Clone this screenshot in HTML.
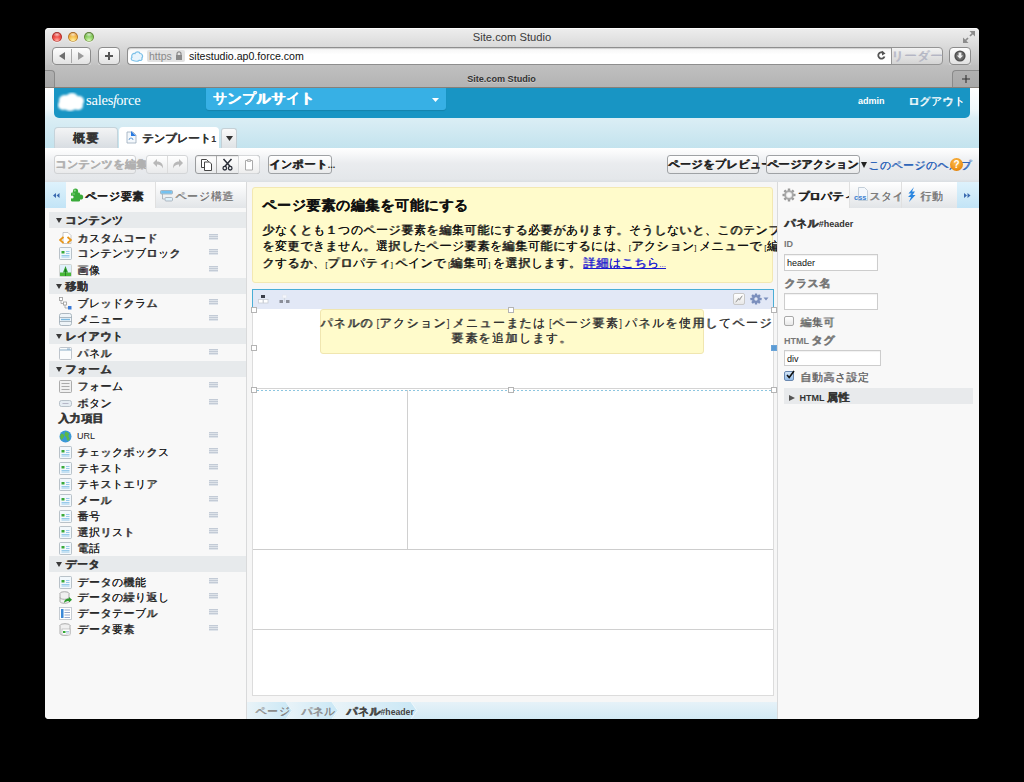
<!DOCTYPE html>
<html><head><meta charset="utf-8">
<style>
*{margin:0;padding:0;box-sizing:border-box}
html,body{width:1024px;height:782px;background:#000;overflow:hidden}
body{position:relative;font-family:"Liberation Sans",sans-serif;color:#222;font-size:10px;line-height:1}
.a{position:absolute;white-space:nowrap}
.win{left:45px;top:28px;width:934px;height:691px;border-radius:5px 5px 4px 4px;overflow:hidden;background:#f4f4f4}
.tl{width:10px;height:10px;border-radius:50%;top:32px;box-shadow:inset 0 0 0 .8px rgba(60,0,0,.35),0 1px 0 rgba(255,255,255,.5)}
.sb{border:1px solid #8c8c8c;border-radius:4px;background:linear-gradient(#fdfdfd,#e2e2e2);box-shadow:0 1px 0 rgba(255,255,255,.6)}
.tb{border:1px solid #b4b6b8;border-radius:3px;background:linear-gradient(#ffffff,#e9eaeb);font-weight:bold;color:#333;text-align:center}
.hd{left:49px;width:197px;height:16px;background:#e7eaec;font-weight:bold;color:#333;font-size:9px;line-height:16px;padding-left:16px;--jl:.69px}
.hd i{position:absolute;left:6.5px;top:5.5px;width:0;height:0;border-left:3.2px solid transparent;border-right:3.2px solid transparent;border-top:5.8px solid #3a3a3a}
.it{left:59px;width:187px;height:16px;line-height:16px;color:#222;font-size:9px;--jl:.55px}
.it i{position:absolute;left:0;top:2px;width:13px;height:13px}
.it>span{position:absolute;left:18px;top:0}
.it b{position:absolute;left:150px;top:4px;width:9px;height:6px;background:repeating-linear-gradient(#c3cbd6 0 1px,#dfe4ea 1px 2px)}

.hdl{width:6px;height:6px;border:1px solid #b4b4b4;background:#fff}
.lbl{left:784px;font-size:9px;font-weight:bold;color:#777}
.inp{left:784px;height:17px;border:1px solid #cdcdcd;background:#fff;font-size:9px;line-height:15px;padding-left:2px;color:#111;box-shadow:inset 0 1px 1px rgba(0,0,0,.06)}
.j{font-size:var(--jf,11px);letter-spacing:var(--jl,.6px);text-shadow:.6px 0 0 currentColor}
</style></head>
<body>
<!-- window -->
<div class="a win"></div>
<!-- title bar -->
<div class="a" style="left:45px;top:28px;width:934px;height:37px;border-radius:4px 4px 0 0;background:linear-gradient(#eeeeee,#dcdcdc 45%,#c2c2c2);box-shadow:inset 0 1px 0 rgba(255,255,255,.8)"></div>
<div class="a tl" style="left:52px;background:radial-gradient(ellipse 40% 25% at 50% 25%,rgba(255,255,255,.7),rgba(255,255,255,0)),radial-gradient(circle at 50% 85%,#ffb0a8 0,#f25850 35%,#d8322c 70%,#9a2420 100%)"></div>
<div class="a tl" style="left:68px;background:radial-gradient(ellipse 40% 25% at 50% 25%,rgba(255,255,255,.7),rgba(255,255,255,0)),radial-gradient(circle at 50% 85%,#fff0a8 0,#f8c858 35%,#e0962a 70%,#9a6412 100%)"></div>
<div class="a tl" style="left:84px;background:radial-gradient(ellipse 40% 25% at 50% 25%,rgba(255,255,255,.7),rgba(255,255,255,0)),radial-gradient(circle at 50% 85%,#d8f8b8 0,#98d870 35%,#68b040 70%,#3a7424 100%)"></div>
<div class="a" style="left:45px;top:32px;width:934px;text-align:center;font-size:11.2px;color:#3a3a3a">Site.com Studio</div>
<!-- resize icon -->
<svg class="a" style="left:963px;top:31px" width="12" height="12" viewBox="0 0 12 12"><path d="M6.5 0H12v5.5z" fill="#8c8c8c"/><path d="M10.5 1.5L7 5" stroke="#8c8c8c" stroke-width="1.7"/><path d="M0 6.5V12h5.5z" fill="#8c8c8c"/><path d="M1.5 10.5L5 7" stroke="#8c8c8c" stroke-width="1.7"/></svg>
<!-- back/forward -->
<div class="a sb" style="left:52px;top:47px;width:39px;height:18px"></div>
<div class="a" style="left:71px;top:49px;width:1px;height:14px;background:#a8a8a8"></div>
<svg class="a" style="left:58px;top:51px" width="30" height="10" viewBox="0 0 30 10"><path d="M7 1v8L1 5z" fill="#6e6e6e"/><path d="M20 1v8l6-4z" fill="#9a9a9a"/></svg>
<div class="a sb" style="left:98px;top:47px;width:22px;height:18px"></div>
<svg class="a" style="left:104px;top:51px" width="10" height="10" viewBox="0 0 10 10"><path d="M5 1v8M1 5h8" stroke="#555" stroke-width="2"/></svg>
<!-- address bar -->
<div class="a" style="left:127px;top:47px;width:765px;height:18px;border:1px solid #8e8e8e;border-right:none;border-radius:4px 0 0 4px;background:linear-gradient(#f4f4f4,#ffffff 40%);box-shadow:inset 0 1px 1px rgba(0,0,0,.15)"></div>
<svg class="a" style="left:130px;top:50px" width="14" height="12" viewBox="0 0 14 12"><path d="M3 10.5C1 10.5 .8 8 2 7.2 1 5 3 3 5 3.6 6 1.2 9.5 1.5 10 3.5c2.5 0 3.3 3 1.8 4.5 1 1.8-1 3-2.5 2.2-1.5 1.3-4 1.2-6.3.3z" fill="#e8f4fc" stroke="#7cc0e8" stroke-width="1.2"/></svg>
<div class="a" style="left:147px;top:50px;width:38px;height:12px;background:#e2e2e2;border-radius:2px"></div>
<div class="a" style="left:149px;top:50px;font-size:10.5px;line-height:12px;color:#8a8a8a">https</div>
<svg class="a" style="left:175px;top:51px" width="8" height="9" viewBox="0 0 8 9"><path d="M2 4V2.8a2 2 0 0 1 4 0V4" fill="none" stroke="#8a8a8a" stroke-width="1.2"/><rect x="1" y="4" width="6" height="5" fill="#8a8a8a"/></svg>
<div class="a" style="left:189px;top:48.8px;font-size:10.6px;line-height:14px;color:#111">sitestudio.ap0.force.com</div>
<svg class="a" style="left:876px;top:50px" width="11" height="11" viewBox="0 0 11 11"><path d="M8.5 6.5A3.2 3.2 0 1 1 7.5 3" fill="none" stroke="#555" stroke-width="1.8"/><path d="M6 .8l3.5 2.6L6 5.6z" fill="#555"/></svg>
<div class="a" style="left:891px;top:47px;width:52px;height:18px;border:1px solid #949494;border-radius:0 4px 4px 0;background:linear-gradient(#f2f2f2,#d4d4d4)"></div>
<div class="a" style="left:891px;top:50px;width:52px;text-align:center;font-size:9.8px;line-height:12px;color:#b4b6c4;--jf:12px;--jl:.92px"><span class="j">リーダー</span></div>
<div class="a sb" style="left:949px;top:47px;width:22px;height:18px"></div>
<svg class="a" style="left:954px;top:50px" width="12" height="12" viewBox="0 0 12 12"><circle cx="6" cy="6" r="5.6" fill="#505050"/><circle cx="6" cy="6" r="4.2" fill="#6a6a6a"/><path d="M4.6 2.6h2.8v2.8h1.8L6 8.8 2.8 5.4h1.8z" fill="#eee"/></svg>
<!-- tab bar -->
<div class="a" style="left:45px;top:65px;width:934px;height:23px;background:linear-gradient(#c0c0c0,#b3b3b3);border-bottom:1px solid #85807a"></div>
<div class="a" style="left:45px;top:70px;width:10px;height:17px;background:linear-gradient(#b0b0b0,#a6a6a6);border:1px solid #8a8a8a;border-left:none;border-bottom:none;border-radius:0 4px 0 0"></div>
<div class="a" style="left:53px;top:74.5px;width:897px;text-align:center;font-size:9.1px;font-weight:bold;color:#333;text-shadow:0 1px 0 rgba(255,255,255,.35)">Site.com Studio</div>
<div class="a" style="left:952px;top:70px;width:27px;height:17px;background:linear-gradient(#b0b0b0,#a8a8a8);border:1px solid #8a8a8a;border-right:none;border-bottom:none;border-radius:4px 0 0 0"></div>
<svg class="a" style="left:961.5px;top:74.5px" width="8" height="8" viewBox="0 0 8 8"><path d="M4 0v8M0 4h8" stroke="#333" stroke-width="1.1"/></svg>

<!-- content bg -->
<div class="a" style="left:45px;top:88px;width:934px;height:60px;background:linear-gradient(#ffffff 0,#f0f8fb 35%,#dbeef5 50%,#c3e3ee 100%)"></div>
<div class="a" style="left:54px;top:88px;width:916px;height:30px;background:#1895c4;border-radius:0 0 5px 5px"></div>
<!-- logo -->
<svg class="a" style="left:57px;top:92px" width="28" height="20" viewBox="0 0 28 20"><g fill="#fff" filter="url(#bl)"><ellipse cx="8" cy="8" rx="6" ry="5"/><ellipse cx="15" cy="6" rx="6" ry="5"/><ellipse cx="22" cy="9" rx="5" ry="5"/><ellipse cx="6" cy="13" rx="5" ry="5"/><ellipse cx="13" cy="14" rx="7" ry="5"/><ellipse cx="21" cy="14" rx="5" ry="4"/></g><defs><filter id="bl"><feGaussianBlur stdDeviation=".8"/></filter></defs></svg>
<div class="a" style="left:86px;top:92px;font-family:'Liberation Serif',serif;font-size:14.5px;line-height:16px;color:#fff;letter-spacing:-.2px">sales<i style="font-style:italic;margin:0 -.5px 0 -.3px">f</i>orce</div>
<div class="a" style="left:206px;top:88px;width:240px;height:22px;background:#37b0e5;border-radius:0 0 3px 3px;box-shadow:0 1px 1px rgba(0,0,0,.12)"></div>
<div class="a" style="left:212.5px;top:91.5px;font-size:11px;line-height:12px;font-weight:bold;color:#fff;--jf:14px;--jl:.64px"><span class="j">サンプルサイト</span></div>
<svg class="a" style="left:432px;top:98px" width="7" height="4" viewBox="0 0 7 4"><path d="M0 0h7L3.5 4z" fill="#fff"/></svg>
<div class="a" style="left:858px;top:96px;font-size:9px;font-weight:bold;color:#fff;line-height:10px">admin</div>
<div class="a" style="left:908px;top:96px;font-size:9px;color:#fff;line-height:10px;--jl:.42px"><span class="j">ログアウト</span></div>
<!-- app tabs -->
<div class="a" style="left:54px;top:127px;width:64px;height:21px;border-radius:4px 4px 0 0;background:linear-gradient(#f3f4f5,#d8dde2);border:1px solid #c5d3da;border-bottom:none"></div>
<div class="a" style="left:54px;top:133px;width:64px;text-align:center;font-size:9.5px;line-height:10px;font-weight:bold;color:#333;--jf:12px;--jl:1.26px"><span class="j">概要</span></div>
<div class="a" style="left:119px;top:127px;width:100px;height:21px;border-radius:4px 4px 0 0;background:#fff"></div>
<svg class="a" style="left:126px;top:131px" width="11" height="13" viewBox="0 0 11 13"><path d="M1 1h6l3 3v8H1z" fill="#f4f8fc" stroke="#9ab" stroke-width=".8"/><path d="M5 0l5 5H5z" fill="#2a7ae0"/><path d="M3 9a2 2 0 0 1 4 0" fill="none" stroke="#48c" stroke-width=".8"/></svg>
<div class="a" style="left:142px;top:133px;font-size:9px;line-height:10px;font-weight:bold;color:#333;--jl:.53px"><span class="j">テンプレート</span>1</div>
<div class="a" style="left:221px;top:128px;width:16px;height:20px;border-radius:3px 3px 0 0;background:linear-gradient(#fafafa,#dfe3e6);border:1px solid #c5d0d6;border-bottom:none"></div>
<svg class="a" style="left:225.5px;top:135.5px" width="7" height="5" viewBox="0 0 7 5"><path d="M0 0h7L3.5 5z" fill="#333"/></svg>
<!-- toolbar -->
<div class="a" style="left:45px;top:148px;width:934px;height:34px;background:linear-gradient(#ffffff 0%,#f7f8f9 18%,#eaecef 45%,#e4e7ea 92%,#dadee2 100%)"></div>
<div class="a tb" style="left:54px;top:155px;width:82px;height:19px;color:#b0b0b0;font-size:9px;line-height:17px;border-color:#d0d2d4;--jl:.61px"><span class="j">コンテンツを編集</span></div>
<div class="a tb" style="left:146px;top:155px;width:42px;height:19px;border-color:#d4d6d8"></div>
<div class="a" style="left:167px;top:156px;width:1px;height:17px;background:#dcdcdc"></div>
<svg class="a" style="left:151px;top:158px" width="34" height="12" viewBox="0 0 34 12"><path d="M2 5l4-4v2.5c4 0 6 2 6 7-1.5-3-3-4-6-4V9z" fill="#b8b8b8"/><path d="M32 5l-4-4v2.5c-4 0-6 2-6 7 1.5-3 3-4 6-4V9z" fill="#b8b8b8"/></svg>
<div class="a tb" style="left:195px;top:155px;width:65px;height:19px;border-color:#9a9c9e;box-shadow:inset 0 1px 1px rgba(0,0,0,.08)"></div>
<div class="a" style="left:216px;top:156px;width:1px;height:17px;background:#aaa"></div>
<div class="a" style="left:238px;top:155px;width:22px;height:19px;background:linear-gradient(#fff,#eee);border:1px solid #d6d8da;border-radius:0 3px 3px 0"></div>
<svg class="a" style="left:200px;top:158px" width="56" height="13" viewBox="0 0 56 13"><path d="M1.5 1.5h5l2 2v6h-7z" fill="#fff" stroke="#444" stroke-width="1"/><path d="M4.5 4h5l2 2v6.5h-7z" fill="#fff" stroke="#444" stroke-width="1"/>
<path d="M23.5 1L30 8.3M31.5 1L25 8.3" stroke="#2a2e38" stroke-width="1.5"/><circle cx="24.8" cy="10.2" r="1.8" fill="none" stroke="#2a2e38" stroke-width="1.3"/><circle cx="30.2" cy="10.2" r="1.8" fill="none" stroke="#2a2e38" stroke-width="1.3"/>
<path d="M45.5 2.5h7v9.5h-7z" fill="#fff" stroke="#aaa" stroke-width="1"/><path d="M47.5 1.5h3v2h-3z" fill="#ddd" stroke="#aaa" stroke-width=".8"/></svg>
<div class="a tb" style="left:268px;top:155px;width:64px;height:19px;border-color:#9fa2a5;font-size:9px;line-height:17px;color:#222;--jl:.73px"><span class="j">インポート</span>...</div>
<div class="a tb" style="left:667px;top:155px;width:92px;height:19px;border-color:#9fa2a5;font-size:9px;line-height:17px;color:#222;--jl:.66px"><span class="j">ページをプレビュー</span></div>
<div class="a tb" style="left:766px;top:155px;width:94px;height:19px;border-color:#9fa2a5;font-size:9px;line-height:17px;color:#222;--jl:.47px"><span class="j">ページアクション</span> <i style="display:inline-block;width:0;height:0;border-left:3.5px solid transparent;border-right:3.5px solid transparent;border-top:6px solid #222;vertical-align:0"></i></div>
<div class="a" style="left:868px;top:160px;font-size:9px;line-height:10px;color:#2a62b8;--jl:.51px"><span class="j">このページのヘルプ</span></div>
<div class="a" style="left:950px;top:158px;width:13px;height:13px;border-radius:50%;background:radial-gradient(circle at 45% 35%,#ffc050,#e88a10 70%,#c86a00);color:#fff;font-size:10px;font-weight:bold;line-height:13px;text-align:center">?</div>

<!-- left panel -->
<div class="a" style="left:45px;top:182px;width:202px;height:537px;background:#f8f8f8;border-right:1px solid #d9dadb;border-bottom-left-radius:4px"></div>
<div class="a" style="left:45px;top:182px;width:21px;height:26px;background:linear-gradient(#def2fc,#c2e4f6)"></div>
<svg class="a" style="left:53px;top:192.5px" width="7" height="5" viewBox="0 0 7 5"><path d="M3 0v5L0 2.5zM6.5 0v5L3.5 2.5z" fill="#3a6ab0"/></svg>
<div class="a" style="left:66px;top:182px;width:89px;height:26px;background:#f9f9f9"></div>
<svg class="a" style="left:70px;top:188px" width="14" height="14" viewBox="0 0 14 14"><g fill="#3aaa3a"><rect x="1" y="4.5" width="9" height="9" rx="1.2"/><circle cx="5.5" cy="3.2" r="2.6"/><circle cx="10.6" cy="9" r="2.6"/><circle cx="2" cy="9" r="1.6" fill="#f9f9f9"/></g><circle cx="4.8" cy="2.6" r="1.1" fill="#8ee08e"/><path d="M2 6h3" stroke="#7cd67c" stroke-width="1"/></svg>
<div class="a" style="left:85px;top:191px;font-size:9px;line-height:10px;font-weight:bold;color:#222;--jl:.85px"><span class="j">ページ要素</span></div>
<div class="a" style="left:155px;top:182px;width:91px;height:26px;background:linear-gradient(#ffffff,#e2e5e8);border-left:1px solid #e0e0e0"></div>
<svg class="a" style="left:160px;top:190px" width="14" height="12" viewBox="0 0 14 12"><rect x=".5" y=".5" width="12" height="3.5" rx="1" fill="#8ecff4" stroke="#a0aab4" stroke-width=".8"/><path d="M1.5 2h10" stroke="#5ab4ec" stroke-width="1"/><path d="M2.5 4v5h2" fill="none" stroke="#a0aab4" stroke-width=".8"/><rect x="5" y="7.5" width="7.5" height="3.5" rx="1" fill="#dff1fb" stroke="#a0aab4" stroke-width=".8"/></svg>
<div class="a" style="left:175px;top:191px;font-size:9px;line-height:10px;color:#7a7a7a;--jl:.85px"><span class="j">ページ構造</span></div>

<div class="a hd" style="top:212px"><i></i><span class="j">コンテンツ</span></div>
<div class="a it" style="top:230px"><i><svg width="13" height="13" viewBox="0 0 13 13"><path d="M4 .5h5l3 3v8H4z" fill="#fff" stroke="#bbb" stroke-width=".8"/><path d="M4.5 5L1 8l3.5 3M8.5 5L12 8l-3.5 3" fill="none" stroke="#e8961a" stroke-width="1.8"/></svg></i><span><span class="j">カスタムコード</span></span><b></b></div>
<div class="a it" style="top:245px"><i><svg width="13" height="13" viewBox="0 0 13 13"><rect x=".5" y=".5" width="12" height="12" rx="1" fill="#f2f8fc" stroke="#aab4bc" stroke-width=".8"/><rect x="2.5" y="4" width="3" height="2.5" fill="#3aaa3a"/><path d="M7 4.5h3.5M7 6.5h3.5M2.5 8.5h8M2.5 10h8" stroke="#8cc4e8" stroke-width=".9"/></svg></i><span><span class="j">コンテンツブロック</span></span><b></b></div>
<div class="a it" style="top:262px"><i><svg width="13" height="13" viewBox="0 0 13 13"><rect x=".5" y=".5" width="12" height="12" rx="1" fill="#dff0fa" stroke="#c8ccc8" stroke-width=".8"/><path d="M1 8.5h11V12H1z" fill="#48b838"/><path d="M6.5 2L9 8.5H4z" fill="#2a9a2a"/><path d="M6.5 5v7" stroke="#1a6a1a" stroke-width=".7"/></svg></i><span><span class="j">画像</span></span><b></b></div>
<div class="a hd" style="top:278px"><i></i><span class="j">移動</span></div>
<div class="a it" style="top:295px"><i><svg width="13" height="13" viewBox="0 0 13 13"><rect x=".5" y=".5" width="3" height="3" fill="#fff" stroke="#999" stroke-width=".8"/><rect x="4.5" y="5" width="3" height="3" fill="#fff" stroke="#999" stroke-width=".8"/><rect x="9" y="9" width="3.5" height="3.5" fill="#3a7ad8"/><path d="M2 3.5v3h2.5M6 8v3h3" fill="none" stroke="#999" stroke-width=".7"/></svg></i><span><span class="j">ブレッドクラム</span></span><b></b></div>
<div class="a it" style="top:311px"><i><svg width="13" height="13" viewBox="0 0 13 13"><rect x=".5" y=".5" width="12" height="12" rx="2" fill="#eef4f8" stroke="#9aa8b2" stroke-width=".8"/><path d="M.5 4.5h12M.5 8.5h12" stroke="#9aa8b2" stroke-width=".8"/><path d="M2 6.5h9" stroke="#7ab8e0" stroke-width="1.4"/></svg></i><span><span class="j">メニュー</span></span><b></b></div>
<div class="a hd" style="top:328px"><i></i><span class="j">レイアウト</span></div>
<div class="a it" style="top:345px"><i><svg width="13" height="13" viewBox="0 0 13 13"><rect x=".5" y=".5" width="12" height="12" rx="1" fill="#fafcfd" stroke="#b0b8c0" stroke-width=".8"/><path d="M.5 3h12" stroke="#b0c8d8" stroke-width="1.5"/><path d="M8 2h3" stroke="#6a9ac0" stroke-width=".8"/></svg></i><span><span class="j">パネル</span></span><b></b></div>
<div class="a hd" style="top:361px"><i></i><span class="j">フォーム</span></div>
<div class="a it" style="top:378px"><i><svg width="13" height="13" viewBox="0 0 13 13"><rect x=".5" y=".5" width="12" height="12" rx="1" fill="#f0f0f0" stroke="#999" stroke-width=".8"/><path d="M2.5 3.5h8M2.5 6.5h8M2.5 9.5h8" stroke="#aaa" stroke-width="1.2"/></svg></i><span><span class="j">フォーム</span></span><b></b></div>
<div class="a it" style="top:395px"><i><svg width="13" height="13" viewBox="0 0 13 13"><rect x=".5" y="3.5" width="12" height="6" rx="2" fill="#e4ecf2" stroke="#a8b4bc" stroke-width=".8"/><path d="M3.5 6.5h6" stroke="#aab" stroke-width=".8"/></svg></i><span><span class="j">ボタン</span></span><b></b></div>
<div class="a" style="left:58px;top:410px;height:16px;line-height:16px;font-weight:bold;color:#333;font-size:9px;--jl:.47px"><span class="j">入力項目</span></div>
<div class="a it" style="top:428px"><i><svg width="13" height="13" viewBox="0 0 13 13"><circle cx="6.5" cy="6.5" r="6" fill="#3a98d8"/><path d="M2 4c1.5-.5 2.5 0 3 1.5S4 8 3 9.5 1.5 8 1 6.5zM7 1.5c1 1 2.5 1 3 2s-1 2-.5 3 1.5 1.5 1 3-2 1.5-2.5.5 0-2-1-3-2-1.5-1.5-3 1-2 1.5-3z" fill="#5ab84a"/></svg></i><span>URL</span><b></b></div>
<div class="a it" style="top:444px"><i><svg width="13" height="13" viewBox="0 0 13 13"><rect x=".5" y=".5" width="12" height="12" rx="1" fill="#f2f8fc" stroke="#aab4bc" stroke-width=".8"/><rect x="2.5" y="4" width="3" height="2.5" fill="#3aaa3a"/><path d="M7 4.5h3.5M7 6.5h3.5M2.5 8.5h8M2.5 10h8" stroke="#8cc4e8" stroke-width=".9"/></svg></i><span><span class="j">チェックボックス</span></span><b></b></div>
<div class="a it" style="top:460px"><i><svg width="13" height="13" viewBox="0 0 13 13"><rect x=".5" y=".5" width="12" height="12" rx="1" fill="#f2f8fc" stroke="#aab4bc" stroke-width=".8"/><rect x="2.5" y="4" width="3" height="2.5" fill="#3aaa3a"/><path d="M7 4.5h3.5M7 6.5h3.5M2.5 8.5h8M2.5 10h8" stroke="#8cc4e8" stroke-width=".9"/></svg></i><span><span class="j">テキスト</span></span><b></b></div>
<div class="a it" style="top:476px"><i><svg width="13" height="13" viewBox="0 0 13 13"><rect x=".5" y=".5" width="12" height="12" rx="1" fill="#f2f8fc" stroke="#aab4bc" stroke-width=".8"/><rect x="2.5" y="4" width="3" height="2.5" fill="#3aaa3a"/><path d="M7 4.5h3.5M7 6.5h3.5M2.5 8.5h8M2.5 10h8" stroke="#8cc4e8" stroke-width=".9"/></svg></i><span><span class="j">テキストエリア</span></span><b></b></div>
<div class="a it" style="top:492px"><i><svg width="13" height="13" viewBox="0 0 13 13"><rect x=".5" y=".5" width="12" height="12" rx="1" fill="#f2f8fc" stroke="#aab4bc" stroke-width=".8"/><rect x="2.5" y="4" width="3" height="2.5" fill="#3aaa3a"/><path d="M7 4.5h3.5M7 6.5h3.5M2.5 8.5h8M2.5 10h8" stroke="#8cc4e8" stroke-width=".9"/></svg></i><span><span class="j">メール</span></span><b></b></div>
<div class="a it" style="top:508px"><i><svg width="13" height="13" viewBox="0 0 13 13"><rect x=".5" y=".5" width="12" height="12" rx="1" fill="#f2f8fc" stroke="#aab4bc" stroke-width=".8"/><rect x="2.5" y="4" width="3" height="2.5" fill="#3aaa3a"/><path d="M7 4.5h3.5M7 6.5h3.5M2.5 8.5h8M2.5 10h8" stroke="#8cc4e8" stroke-width=".9"/></svg></i><span><span class="j">番号</span></span><b></b></div>
<div class="a it" style="top:524px"><i><svg width="13" height="13" viewBox="0 0 13 13"><rect x=".5" y=".5" width="12" height="12" rx="1" fill="#f2f8fc" stroke="#aab4bc" stroke-width=".8"/><rect x="2.5" y="4" width="3" height="2.5" fill="#3aaa3a"/><path d="M7 4.5h3.5M7 6.5h3.5M2.5 8.5h8M2.5 10h8" stroke="#8cc4e8" stroke-width=".9"/></svg></i><span><span class="j">選択リスト</span></span><b></b></div>
<div class="a it" style="top:540px"><i><svg width="13" height="13" viewBox="0 0 13 13"><rect x=".5" y=".5" width="12" height="12" rx="1" fill="#f2f8fc" stroke="#aab4bc" stroke-width=".8"/><rect x="2.5" y="4" width="3" height="2.5" fill="#3aaa3a"/><path d="M7 4.5h3.5M7 6.5h3.5M2.5 8.5h8M2.5 10h8" stroke="#8cc4e8" stroke-width=".9"/></svg></i><span><span class="j">電話</span></span><b></b></div>
<div class="a hd" style="top:556px"><i></i><span class="j">データ</span></div>
<div class="a it" style="top:574px"><i><svg width="13" height="13" viewBox="0 0 13 13"><rect x=".5" y=".5" width="12" height="12" rx="1" fill="#f2f8fc" stroke="#aab4bc" stroke-width=".8"/><rect x="2.5" y="4" width="3" height="2.5" fill="#3aaa3a"/><path d="M7 4.5h3.5M7 6.5h3.5M2.5 8.5h8M2.5 10h8" stroke="#8cc4e8" stroke-width=".9"/></svg></i><span><span class="j">データの機能</span></span><b></b></div>
<div class="a it" style="top:589px"><i><svg width="13" height="13" viewBox="0 0 13 13"><ellipse cx="5.5" cy="2.5" rx="4.5" ry="1.8" fill="#eee" stroke="#999" stroke-width=".8"/><path d="M1 2.5v8c0 1 2 1.8 4.5 1.8S10 11.5 10 10.5v-8M1 6.5c0 1 2 1.8 4.5 1.8S10 7.5 10 6.5" fill="#f0f0f0" stroke="#999" stroke-width=".8"/><path d="M5 12c0-3 2-4.5 5-4.5V6l3 2.8-3 2.7V10c-2 0-3.5.5-5 2z" fill="#2a9a2a"/></svg></i><span><span class="j">データの繰り返し</span></span><b></b></div>
<div class="a it" style="top:605px"><i><svg width="13" height="13" viewBox="0 0 13 13"><rect x=".5" y=".5" width="12" height="12" fill="#fff" stroke="#b8c0c8" stroke-width=".8"/><rect x="2" y="2" width="2.5" height="9" fill="#3a88d8"/><path d="M5.5 3h5.5M5.5 5.5h5.5M5.5 8h5.5M5.5 10.5h5.5" stroke="#9ac" stroke-width="1"/></svg></i><span><span class="j">データテーブル</span></span><b></b></div>
<div class="a it" style="top:621px"><i><svg width="13" height="13" viewBox="0 0 13 13"><ellipse cx="6" cy="2.5" rx="5" ry="1.8" fill="#eee" stroke="#999" stroke-width=".8"/><path d="M1 2.5v8c0 1 2.2 1.8 5 1.8s5-.8 5-1.8v-8" fill="#f0f0f0" stroke="#999" stroke-width=".8"/><rect x="3" y="6" width="8" height="6" fill="#fff" stroke="#aaa" stroke-width=".6"/><rect x="4" y="8" width="2.5" height="2" fill="#3a3"/><path d="M7 8.5h3M7 10h3" stroke="#8ac" stroke-width=".7"/></svg></i><span><span class="j">データ要素</span></span><b></b></div>
<!-- center panel -->
<div class="a" style="left:247px;top:182px;width:530px;height:537px;background:#f6f6f6"></div>
<div class="a" style="left:252px;top:187px;width:521px;height:96px;background:#fffbcb;border:1px solid #f3e8b2;border-radius:3px"></div>
<div class="a" style="left:262px;top:199px;font-size:11.1px;line-height:12px;font-weight:bold;color:#111;--jf:14px;--jl:.75px"><span class="j">ページ要素の編集を可能にする</span></div>
<div class="a" style="left:262px;top:222.8px;font-size:8px;line-height:14.4px;color:#111;white-space:nowrap;--jf:12px;--jl:.65px"><span class="j">少なくとも１つのページ要素を編集可能にする必要があります。そうしないと、このテンプレートに基づいてページ</span><br><span class="j">を変更できません。選択したページ要素を編集可能にするには、</span>[<span class="j">アクション</span>] <span class="j">メニューで</span> [<span class="j">編集可能にする</span>] <span class="j">をクリッ</span><br><span class="j">クするか、</span>[<span class="j">プロパティ</span>] <span class="j">ペインで</span> [<span class="j">編集可</span>] <span class="j">を選択します。</span> <span style="color:#1a1ad0;text-decoration:underline"><span class="j">詳細はこちら</span>...</span></div>
<!-- canvas -->
<div class="a" style="left:252px;top:289px;width:522px;height:407px;background:#fff;border:1px solid #dcdcdc"></div>
<div class="a" style="left:252px;top:289px;width:522px;height:20px;background:#e2e8f6;border:1px solid #4aaed6;border-bottom:none"></div>
<svg class="a" style="left:257px;top:293px" width="40" height="12" viewBox="0 0 40 12"><rect x="4" y="2" width="4" height="3" fill="#3a3e4a"/><rect x="1.5" y="6.5" width="4.5" height="3.5" fill="#fff" stroke="#c8ccd4" stroke-width=".8"/><rect x="6.5" y="6.5" width="4.5" height="3.5" fill="#fff" stroke="#c8ccd4" stroke-width=".8"/><rect x="25.5" y="2" width="4" height="3" fill="#f4f6fc" stroke="#e0e4ec" stroke-width=".6"/><path d="M27.5 5v4" stroke="#c8ccd4" stroke-width=".6"/><rect x="22.5" y="7" width="3.5" height="3" fill="#8a8e98"/><rect x="29" y="7" width="3.5" height="3" fill="#8a8e98"/></svg>
<div class="a" style="left:733px;top:293px;width:12px;height:12px;border:1px solid #c8c8c8;background:linear-gradient(#fff,#e8e8e8);border-radius:2px"></div>
<svg class="a" style="left:735px;top:295px" width="8" height="8" viewBox="0 0 8 8"><path d="M.8 7.2L3.5 3.2 4.2 4.6 7.2.8 4.6 5.2 3.8 3.8z" fill="#a0a0a0" stroke="#a0a0a0" stroke-width=".7"/></svg>
<svg class="a" style="left:748.5px;top:292.2px" width="24" height="14" viewBox="0 0 24 14"><g transform="translate(7 7)" fill="#7b8fbd"><circle r="3.9"/><rect x="-1.2" y="-5.6" width="2.4" height="11.2" rx=".5"/><rect x="-1.2" y="-5.6" width="2.4" height="11.2" rx=".5" transform="rotate(45)"/><rect x="-1.2" y="-5.6" width="2.4" height="11.2" rx=".5" transform="rotate(90)"/><rect x="-1.2" y="-5.6" width="2.4" height="11.2" rx=".5" transform="rotate(135)"/><circle r="1.7" fill="#e2e8f6"/></g><path d="M14.5 5.5h5l-2.5 3z" fill="#7b8fbd"/></svg>
<div class="a" style="left:320px;top:309px;width:384px;height:45px;background:#fffbcb;border:1px solid #f0e6b0;border-radius:3px"></div>
<div class="a" style="left:320px;top:316px;width:384px;text-align:center;font-size:10px;line-height:15.2px;color:#333;white-space:nowrap;--jf:12px;--jl:1.45px"><span class="j">パネルの</span> [<span class="j">アクション</span>] <span class="j">メニューまたは</span> [<span class="j">ページ要素</span>] <span class="j">パネルを使用してページ</span><br><span class="j">要素を追加します。</span></div>
<div class="a" style="left:253px;top:388px;width:520px;height:1px;background:#d4d4d4"></div><div class="a" style="left:253px;top:390px;width:520px;height:1px;background:repeating-linear-gradient(90deg,#8cc6e0 0 2px,transparent 2px 4px)"></div>
<div class="a" style="left:407px;top:390px;width:1.2px;height:159px;background:#d0d0d0"></div>
<div class="a" style="left:253px;top:548.5px;width:520px;height:1.5px;background:#cdcdcd"></div>
<div class="a" style="left:253px;top:629px;width:520px;height:1.2px;background:#d0d0d0"></div>
<div class="a hdl" style="left:251px;top:307px"></div>
<div class="a hdl" style="left:508px;top:307px"></div>
<div class="a hdl" style="left:771px;top:307px"></div>
<div class="a hdl" style="left:251px;top:345px"></div>
<div class="a hdl" style="left:771px;top:345px;background:#5b9bd5;border-color:#6aa4d8"></div>
<div class="a hdl" style="left:251px;top:387px"></div>
<div class="a hdl" style="left:508px;top:387px"></div>
<div class="a hdl" style="left:771px;top:387px"></div>
<!-- breadcrumb -->
<svg class="a" style="left:247px;top:702px" width="530" height="17" viewBox="0 0 530 17"><defs><linearGradient id="bg1" x1="0" x2="1"><stop offset="0" stop-color="#e9f3f8"/><stop offset="1" stop-color="#c9e7f5"/></linearGradient><linearGradient id="bgv" x1="0" y1="0" x2="0" y2="1"><stop offset="0" stop-color="#e6f2f8"/><stop offset="1" stop-color="#d2e9f4"/></linearGradient></defs>
<rect width="530" height="17" fill="url(#bgv)"/>
<path d="M0 0h39l6 8.5L39 17H0z" fill="url(#bg1)"/>
<path d="M40 0h45l6 8.5L85 17H40l6-8.5z" fill="url(#bg1)"/>
<path d="M86 0h78l6 8.5L164 17H86l6-8.5z" fill="url(#bg1)"/>
<path d="M39 0l6 8.5L39 17M85 0l6 8.5L85 17M164 0l6 8.5L164 17" fill="none" stroke="#eef7fb" stroke-width="1"/></svg>
<div class="a" style="left:255px;top:706px;font-size:8.7px;line-height:10px;color:#888;--jl:.78px"><span class="j">ページ</span></div>
<div class="a" style="left:301px;top:706px;font-size:8.7px;line-height:10px;color:#888;--jl:.37px"><span class="j">パネル</span></div>
<div class="a" style="left:346px;top:706px;font-size:8.7px;line-height:10px;font-weight:bold;color:#444;--jl:.5px"><span class="j">パネル</span>#header</div>
<!-- right panel -->
<div class="a" style="left:777px;top:182px;width:202px;height:537px;background:#f8f8f8;border-left:1px solid #d9dadb;border-bottom-right-radius:4px"></div>
<div class="a" style="left:778px;top:182px;width:71px;height:26px;background:#f9f9f9"></div>
<svg class="a" style="left:782px;top:188px" width="14" height="14" viewBox="0 0 14 14"><g transform="translate(7 7)"><g fill="#999"><rect x="-1.2" y="-6.5" width="2.4" height="13"/><rect x="-1.2" y="-6.5" width="2.4" height="13" transform="rotate(45)"/><rect x="-1.2" y="-6.5" width="2.4" height="13" transform="rotate(90)"/><rect x="-1.2" y="-6.5" width="2.4" height="13" transform="rotate(135)"/></g><circle r="4.8" fill="#a8a8a8"/><circle r="3" fill="#e8e8e8"/><circle r="2" fill="#f9f9f9"/></g></svg>
<div class="a" style="left:798px;top:191px;font-size:9px;line-height:10px;font-weight:bold;color:#222;--jl:.42px"><span class="j">プロパティ</span></div>
<div class="a" style="left:849px;top:182px;width:52px;height:26px;background:linear-gradient(#ffffff,#e2e5e8);border-left:1px solid #e0e0e0"></div>
<svg class="a" style="left:856px;top:187px" width="12" height="14" viewBox="0 0 12 14"><path d="M2.5.5h6l3 3v10h-9z" fill="#f4f8fc" stroke="#b8c4d0" stroke-width=".8"/></svg><div class="a" style="left:854px;top:194px;font-size:7.5px;line-height:8px;font-weight:bold;color:#3a80d0">css</div>
<div class="a" style="left:869px;top:191px;font-size:8.8px;line-height:10px;color:#777;--jl:.54px"><span class="j">スタイ</span></div>
<div class="a" style="left:901px;top:182px;width:56px;height:26px;background:linear-gradient(#ffffff,#e2e5e8);border-left:1px solid #e0e0e0"></div>
<svg class="a" style="left:907px;top:187px" width="9" height="15" viewBox="0 0 9 15"><path d="M7 0L1.5 6.5h3L1 10h3l-2 5 6.5-7h-3L8 4.5H5z" fill="#2a86e0"/></svg>
<div class="a" style="left:920px;top:191px;font-size:8.8px;line-height:10px;color:#777;--jl:.8px"><span class="j">行動</span></div>
<div class="a" style="left:957px;top:182px;width:22px;height:26px;background:linear-gradient(#def2fc,#c2e4f6)"></div>
<svg class="a" style="left:964px;top:192.5px" width="7" height="5" viewBox="0 0 7 5"><path d="M0 0v5l3-2.5zM3.5 0v5l3-2.5z" fill="#3a6ab0"/></svg>
<div class="a" style="left:784px;top:218px;font-size:9px;line-height:10px;font-weight:bold;color:#333"><span class="j">パネル</span>#header</div>
<div class="a lbl" style="top:239px;line-height:10px">ID</div>
<div class="a inp" style="top:254px;width:94px;line-height:17px">header</div>
<div class="a lbl" style="top:278px;line-height:10px;--jl:.72px"><span class="j">クラス名</span></div>
<div class="a inp" style="top:293px;width:94px"></div>
<div class="a" style="left:784px;top:315.5px;width:10px;height:10px;border:1px solid #a8a8a8;border-radius:2px;background:linear-gradient(#fff,#e8e8e8)"></div>
<div class="a" style="left:800px;top:317px;font-size:9px;line-height:10px;color:#666;--jl:.65px"><span class="j">編集可</span></div>
<div class="a lbl" style="top:335px;line-height:10px">HTML <span class="j">タグ</span></div>
<div class="a inp" style="top:350px;width:97px;height:16px;line-height:16px">div</div>
<div class="a" style="left:784px;top:370.5px;width:10px;height:10px;border:1px solid #6a88b0;border-radius:2px;background:linear-gradient(#d4e6f8,#94bce8)"></div>
<svg class="a" style="left:785px;top:369.5px" width="10" height="10" viewBox="0 0 10 10"><path d="M2 5l2.2 2.5L9 1" fill="none" stroke="#111" stroke-width="1.6"/></svg>
<div class="a" style="left:800px;top:372px;font-size:9px;line-height:10px;color:#666;--jl:.56px"><span class="j">自動高さ設定</span></div>
<div class="a" style="left:784px;top:388px;width:189px;height:16px;background:#e8eaec"></div>
<div class="a" style="left:789px;top:392px;font-size:9px;line-height:10px;font-weight:bold;color:#333"><i style="display:inline-block;width:0;height:0;border-top:3.5px solid transparent;border-bottom:3.5px solid transparent;border-left:6px solid #555;vertical-align:0;margin-right:2px"></i> HTML <span class="j">属性</span></div>
<!-- CONTENT -->
</body></html>
